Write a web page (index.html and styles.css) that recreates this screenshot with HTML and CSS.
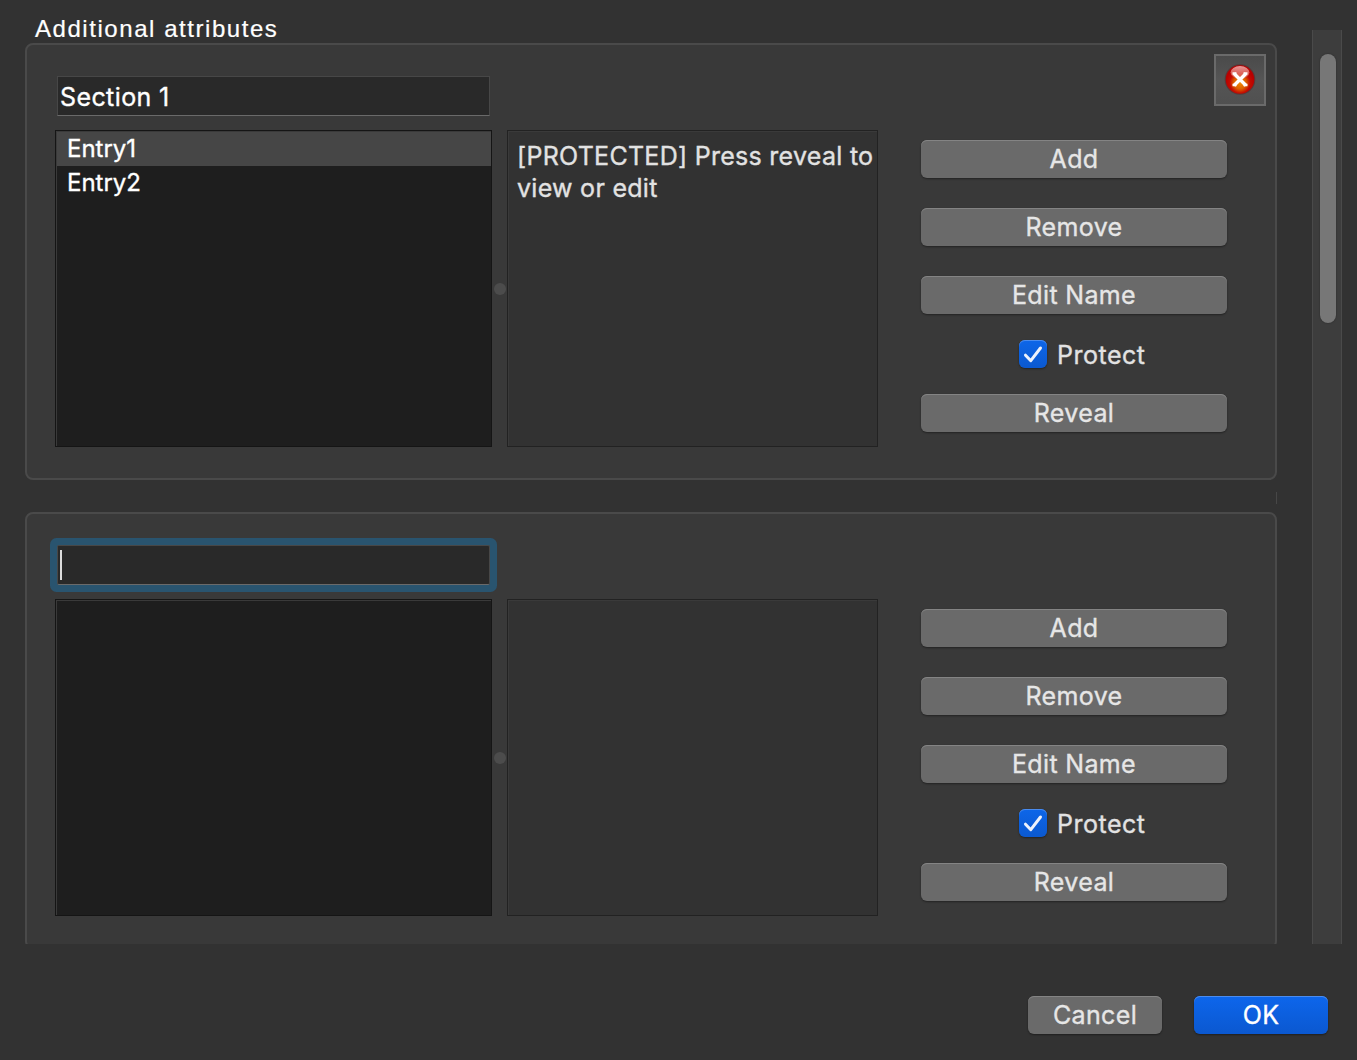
FILE: index.html
```html
<!DOCTYPE html>
<html lang="en">
<head>
<meta charset="utf-8">
<title>Additional attributes</title>
<link rel="stylesheet" href="styles.css">
</head>
<body>
<main class="viewport">
  <div class="content">
    <h1 class="title">Additional attributes</h1>
    <section class="panel">
      <div class="editor">
        <div class="field"><span class="field-text">Section 1</span></div>
        <div class="split">
          <ul class="list">
            <li class="entry selected">Entry1</li>
            <li class="entry">Entry2</li>
          </ul>
          <div class="handle"></div>
          <div class="detail">[PROTECTED] Press reveal to<br>view or edit</div>
        </div>
      </div>
      <div class="actions">
        <button class="btn">Add</button>
        <button class="btn">Remove</button>
        <button class="btn">Edit Name</button>
        <label class="protect">
          <svg class="check" viewBox="0 0 28 28"><path d="M6.5 15.2 11.8 20.7 21.5 8"/></svg>
          <span class="protect-text">Protect</span>
        </label>
        <button class="btn">Reveal</button>
      </div>
      <button class="remove-section" aria-label="Remove section">
        <svg viewBox="0 0 32 32">
          <defs>
            <radialGradient id="ball" cx=".5" cy=".62" r=".5">
              <stop offset="0" stop-color="#f08a00"/>
              <stop offset=".42" stop-color="#dc6200"/>
              <stop offset=".72" stop-color="#c40b00"/>
              <stop offset="1" stop-color="#b80000"/>
            </radialGradient>
            <linearGradient id="gloss" x1="0" y1="0" x2="0" y2="1">
              <stop offset="0" stop-color="#e89a9a"/>
              <stop offset="1" stop-color="#dc5a4c" stop-opacity=".7"/>
            </linearGradient>
          </defs>
          <circle cx="16" cy="15.5" r="15.3" fill="#5a2a2a" opacity=".6"/>
          <circle cx="16" cy="15.5" r="14.3" fill="url(#ball)"/>
          <ellipse cx="16" cy="8.5" rx="9.4" ry="6.4" fill="url(#gloss)"/>
          <path d="M10 9.5 22 21.500M22 9.500 10 21.500" stroke="#fff" stroke-width="3.4"/>
          <path d="M8.500 9.500h4M19.500 9.500h4M8.500 21h4M19.500 21h4" stroke="#fff" stroke-width="2.600"/>
        </svg>
      </button>
    </section>
    <div class="gap"><i></i></div>
    <section class="panel">
      <div class="editor">
        <div class="field focused"><i class="caret"></i></div>
        <div class="split">
          <ul class="list"></ul>
          <div class="handle"></div>
          <div class="detail"></div>
        </div>
      </div>
      <div class="actions">
        <button class="btn">Add</button>
        <button class="btn">Remove</button>
        <button class="btn">Edit Name</button>
        <label class="protect">
          <svg class="check" viewBox="0 0 28 28"><path d="M6.5 15.2 11.8 20.7 21.5 8"/></svg>
          <span class="protect-text">Protect</span>
        </label>
        <button class="btn">Reveal</button>
      </div>
    </section>
  </div>
  <div class="track"><div class="thumb"></div></div>
</main>
<footer class="footer">
  <button class="btn cancel">Cancel</button>
  <button class="btn ok">OK</button>
</footer>
</body>
</html>
```
FILE: styles.css
```css
* { box-sizing: border-box; }
body {
  margin: 0;
  width: 1357px;
  height: 1060px;
  overflow: hidden;
  background: #323232;
  color: #e2e2e2;
  font: 25px/32px Inter, "Liberation Sans", sans-serif;
  -webkit-text-stroke: .35px;
}
.viewport {
  display: flex;
  justify-content: space-between;
  height: 944px;
  padding: 0 15px 0 25px;
  overflow: hidden;
}
.content { width: 1252px; }
.title {
  margin: 0;
  height: 43px;
  padding: 13px 0 0 10px;
  color: #fff;
  font: 400 24px/32px "Liberation Sans", sans-serif;
  letter-spacing: 1.55px;
  white-space: nowrap;
  -webkit-text-stroke: .2px;
}
.panel {
  position: relative;
  display: flex;
  gap: 43px;
  height: 437px;
  padding: 31px 0 0 28px;
  border: 2px solid #4a4a4a;
  border-radius: 8px;
  background: #393939;
}
.gap {
  display: flex;
  justify-content: flex-end;
  height: 32px;
  padding-top: 12px;
}
.gap i { width: 1px; height: 12px; background: #474747; }
.editor { width: 823px; }
.field {
  display: flex;
  align-items: center;
  width: 433px;
  height: 40px;
  margin: 0 0 14px 2px;
  padding-left: 2px;
  border: 1px solid #474747;
  border-bottom-color: #6a6a6a;
  background: #292929;
  color: #fff;
  white-space: nowrap;
}
.field-text { padding-top: 2px; letter-spacing: .4px; }
.focused { box-shadow: 0 0 0 7px #29546f; border-radius: 2px; }
.caret { width: 2px; height: 30px; background: #dcdcdc; }
.split { display: flex; height: 317px; }
.list {
  width: 437px;
  margin: 0;
  padding: 1px 0 0 1px;
  border: 1px solid #151515;
  background: #1e1e1e;
  box-shadow: inset 1px 1px #3a3a3a;
  color: #fff;
  list-style: none;
}
.entry { height: 34px; padding-left: 10px; font-size: 24px; line-height: 34px; white-space: nowrap; }
.selected { background: #464646; }
.handle {
  width: 12px;
  height: 12px;
  margin: 153px 1px 0 2px;
  border-radius: 50%;
  background: #4c4c4c;
}
.detail {
  width: 371px;
  padding: 9px 0 0 9px;
  border: 1px solid #222;
  background: #323232;
  box-shadow: inset 1px 1px #3a3a3a;
  letter-spacing: .28px;
  white-space: nowrap;
}
.actions {
  display: flex;
  flex-direction: column;
  width: 306px;
  padding-top: 64px;
}
.btn {
  display: flex;
  align-items: center;
  justify-content: center;
  height: 38px;
  flex: none;
  margin: 0;
  padding: 0;
  border: 0;
  border-radius: 6px;
  background: #6a6a6a;
  box-shadow: inset 0 1px #848484, 0 1px 2px rgba(0, 0, 0, .4);
  color: #e6e6e6;
  font: inherit;
  letter-spacing: .35px;
  white-space: nowrap;
}
.actions .btn + .btn { margin-top: 30px; }
.protect {
  display: flex;
  align-items: center;
  gap: 10px;
  height: 28px;
  margin: 26px 0 26px 98px;
}
.protect-text { padding-top: 2px; letter-spacing: .5px; }
.check {
  width: 28px;
  height: 28px;
  border-radius: 6px;
  background: linear-gradient(#0d66e9, #0b59d0);
  box-shadow: inset 0 1px #4b8cee, 0 1px 2px rgba(0, 0, 0, .4);
}
.check path {
  fill: none;
  stroke: #edf2fc;
  stroke-width: 3;
  stroke-linecap: round;
  stroke-linejoin: round;
}
.remove-section {
  position: absolute;
  top: 9px;
  right: 9px;
  display: grid;
  place-items: center;
  width: 52px;
  height: 52px;
  padding: 0;
  border: 2px solid #6a6a6a;
  background: linear-gradient(#4a4a4a, #555 50%, #505050);
}
.remove-section svg { width: 32px; height: 32px; }
.track {
  width: 30px;
  height: 914px;
  margin-top: 30px;
  padding: 24px 0 0 7px;
  border: solid #4a4a4a;
  border-width: 0 1px;
  background: #3d3d3d;
}
.thumb {
  width: 16px;
  height: 269px;
  border-radius: 8px;
  background: #777;
  box-shadow: 0 0 2px rgba(0, 0, 0, .35);
}
.footer {
  display: flex;
  justify-content: flex-end;
  gap: 32px;
  padding: 52px 29px 0 0;
}
.footer .btn { width: 134px; }
.footer .ok {
  background: linear-gradient(#0d66ec, #0b58d0);
  box-shadow: inset 0 1px #4b8cee, 0 1px 2px rgba(0, 0, 0, .4);
  color: #fff;
}
```
